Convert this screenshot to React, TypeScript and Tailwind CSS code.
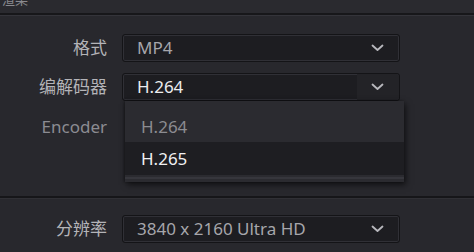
import React from "react";

const Chevron = () => (
  <svg width="13" height="8" viewBox="0 0 13 8" className="shrink-0">
    <path d="M1.5 1.5 L6.5 6 L11.5 1.5" fill="none" stroke="#b8b8bd" strokeWidth="1.8" strokeLinecap="round" strokeLinejoin="round" />
  </svg>
);

const Select = ({ value, active }: { value: string; active?: boolean }) => (
  <div className="relative flex h-[28px] w-[278px] items-center rounded-[3px] border border-[#141417] bg-[#1d1d21] pl-[14px] pr-[15px] shadow-[inset_0_0_0_1px_#303036]">
    <span className={active ? "flex-1 text-[17px] text-[#ececee]" : "flex-1 text-[17px] text-[#a6a6ab]"}>{value}</span>
    {active && <div className="absolute right-0 top-0 h-full w-[42px] rounded-r-[3px] bg-[#232327]" />}
    <span className="relative"><Chevron /></span>
  </div>
);

const Label = ({ children, dim }: { children: React.ReactNode; dim?: boolean }) => (
  <div className={dim ? "w-[107px] text-right text-[17px] text-[#8c8c92]" : "w-[107px] text-right text-[17px] text-[#b4b4b8]"}>
    {children}
  </div>
);

export default function App() {
  return (
    <div
      className="relative h-[252px] w-[474px] overflow-hidden bg-[#28282d]"
      style={{ fontFamily: '"Noto Sans", "Noto Sans CJK SC", sans-serif' }}
    >
      <div className="relative h-[13px] bg-[#2a2a2f]">
        <span className="absolute left-[2px] top-[-10px] text-[13px] text-[#8a8a8f]">渲染</span>
      </div>
      <div className="h-[2px] bg-[#17171a]" />
      <div className="h-[1px] bg-[#34343a]" />

      <div className="flex flex-col pt-[18px]">
        <div className="flex items-center gap-[15px]">
          <Label>格式</Label>
          <Select value="MP4" />
        </div>
        <div className="mt-[11px] flex items-center gap-[15px]">
          <Label>编解码器</Label>
          <Select value="H.264" active />
        </div>
        <div className="flex h-[52px] items-center">
          <Label dim>Encoder</Label>
        </div>
        <div className="h-[43px]" />
        <div className="h-[2px] bg-[#161619]" />
        <div className="h-[1px] bg-[#303035]" />
        <div className="mt-[16px] flex items-center gap-[15px]">
          <Label>分辨率</Label>
          <Select value="3840 x 2160 Ultra HD" />
        </div>
      </div>

      <div className="absolute left-[125px] top-[101px] w-[279px] bg-[#2b2b30] pt-[11px] pb-[3px] shadow-[2px_3px_6px_rgba(0,0,0,0.55),-1px_0_3px_rgba(0,0,0,0.4)]">
        <div className="flex h-[30px] items-center pl-[16px] text-[17px] text-[#8c8c91]">H.264</div>
        <div className="flex h-[33px] items-center bg-[#1e1e22] pl-[16px] text-[17px] text-[#f0f0f2]">H.265</div>
        <div className="mt-[2px] h-[2px] bg-[#36363c]" />
      </div>
    </div>
  );
}
